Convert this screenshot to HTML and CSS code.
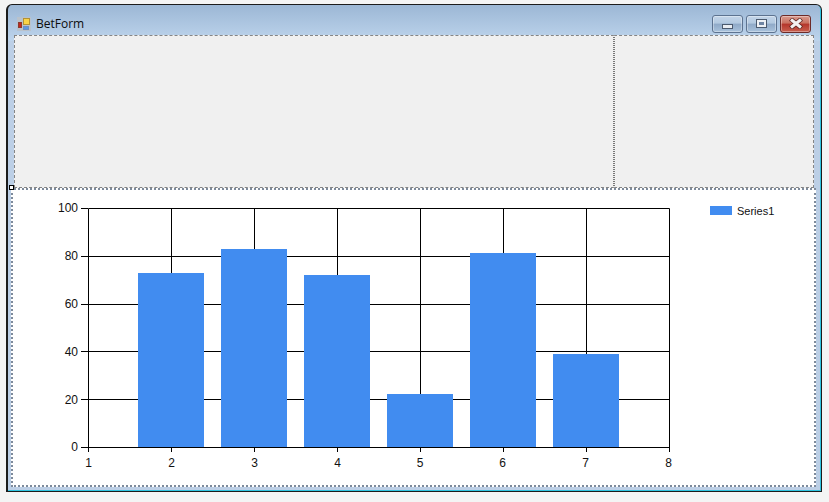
FILE: index.html
```html
<!DOCTYPE html>
<html>

<head>
    <title>BetForm</title>
    <link rel="stylesheet" href="styles.css">
</head>

<body>
    <div class="window">
        <div class="titlebar">
            <svg class="app-icon" width="14" height="14" viewBox="0 0 14 14">
                <rect x="0" y="0" width="14" height="14" fill="#b9c2cc"/>
                <rect x="1.5" y="5.5" width="3" height="5" fill="#c4261c" stroke="#8a3a30"/>
                <rect x="6.5" y="1.5" width="6" height="6" fill="#f9d348" stroke="#b39236"/>
                <rect x="6.5" y="9.5" width="5" height="3" fill="#5b97e6" stroke="#6f90c0"/>
            </svg>
            <span class="title">BetForm</span>
            <div class="controls">
                <div class="ctl">
                    <span class="glyph-min"></span>
                </div>
                <div class="ctl">
                    <span class="glyph-max"></span>
                </div>
                <div class="ctl ctl-close">
                    <svg width="16" height="11" viewBox="0 0 16 11">
                        <path d="M2.5 1 L13.5 10 M13.5 1 L2.5 10" stroke="#5c2420" stroke-width="4.6"/>
                        <path d="M3 1.5 L13 9.5 M13 1.5 L3 9.5" stroke="#f4f2f0" stroke-width="3"/>
                    </svg>
                </div>
            </div>
        </div>
        <div class="top-row">
            <div class="panel panel-left"></div>
            <div class="panel panel-right"></div>
        </div>
        <div class="chart-panel">
            <div class="handle"></div>
            <svg class="chart" viewBox="11 188 805 299">
                <g class="grid">
                    <path d="M171.5 208V447M254.5 208V447M337.5 208V447M420.5 208V447M503.5 208V447M586.5 208V447"/>
                    <path d="M88 256.5H669M88 304.5H669M88 351.5H669M88 399.5H669"/>
                    <path d="M88.5 208.5H669.5V447.5H88.5Z"/>
                    <path d="M81 208.5H88M81 256.5H88M81 304.5H88M81 351.5H88M81 399.5H88M81 447.5H88"/>
                    <path d="M88.5 447V452M171.5 447V452M254.5 447V452M337.5 447V452M420.5 447V452M503.5 447V452M586.5 447V452M669.5 447V452"/>
                </g>
                <g class="bars">
                    <rect x="138" y="273" width="66" height="174"/>
                    <rect x="221" y="249" width="66" height="198"/>
                    <rect x="304" y="275" width="66" height="172"/>
                    <rect x="387" y="394" width="66" height="53"/>
                    <rect x="470" y="253" width="66" height="194"/>
                    <rect x="553" y="354" width="66" height="93"/>
                </g>
                <g class="ticks-y">
                    <text x="78" y="212">100</text>
                    <text x="78" y="260">80</text>
                    <text x="78" y="308">60</text>
                    <text x="78" y="356">40</text>
                    <text x="78" y="404">20</text>
                    <text x="78" y="451">0</text>
                </g>
                <g class="ticks-x">
                    <text x="88.5" y="467">1</text>
                    <text x="171.5" y="467">2</text>
                    <text x="254.5" y="467">3</text>
                    <text x="337.5" y="467">4</text>
                    <text x="420" y="467">5</text>
                    <text x="502.5" y="467">6</text>
                    <text x="585.5" y="467">7</text>
                    <text x="668.5" y="467">8</text>
                </g>
                <rect class="legend-key" x="710" y="206" width="22" height="9"/>
                <text class="legend-text" x="737" y="215">Series1</text>
            </svg>
        </div>
    </div>
</body>

</html>
```

FILE: styles.css
```css
html,
body {
    height: 100%;
    margin: 0;
    padding: 0;
}

body {
    background-color: #f4f4f4;
    font-family: "Open Sans", "Liberation Sans", sans-serif;
}

.window {
    box-sizing: border-box;
    display: flex;
    flex-direction: column;
    width: 816px;
    height: 488px;
    margin: 4px 0 0 6px;
    padding: 0 5px 4px 3px;
    border: 1px solid #1c1c1c;
    border-left-width: 2px;
    border-radius: 6px 6px 0 0;
    background: linear-gradient(#9cb7d5, #bdd4ec 36px, #bccfe6 36px);
    box-shadow: inset -1px -1px 0 #2fc4e0;
}

.titlebar {
    display: flex;
    align-items: center;
    height: 30px;
    flex: none;
    padding: 0 3px 0 6px;
}

.app-icon {
    margin-top: 7px;
}

.title {
    margin: 6px 0 0 5px;
    font-size: 12px;
    color: #0c0c0c;
}

.controls {
    display: flex;
    gap: 3px;
    margin-left: auto;
    margin-top: 7px;
    margin-right: 2px;
}

.ctl {
    display: flex;
    align-items: center;
    justify-content: center;
    box-sizing: border-box;
    width: 31px;
    height: 18px;
    border: 1px solid #5d7390;
    border-radius: 3px;
    background: linear-gradient(#c3d5e9, #b3c9e0 45%, #8fa9c7 50%, #a9c2dc);
    box-shadow: inset 0 0 0 1px rgba(255, 255, 255, 0.35);
}

.ctl-close {
    border-color: #6d2b28;
    background: linear-gradient(#d99a8e, #c9705f 45%, #b4352a 50%, #c8604f);
}

.glyph-min {
    display: block;
    width: 9px;
    height: 3px;
    margin-top: 5px;
    border: 1px solid #4b5a6e;
    background-color: #e9edf2;
}

.glyph-max {
    display: block;
    box-sizing: border-box;
    width: 9px;
    height: 7px;
    border: 2px solid #eef1f5;
    outline: 1px solid #4b5a6e;
    background-color: #6f85a3;
}

.top-row {
    display: flex;
    flex: none;
    height: 153px;
    margin: 0 2px 0 3px;
}

.panel {
    box-sizing: border-box;
    height: 100%;
    border: 1px dashed #858585;
    background-color: #f0f0f0;
}

.panel-left {
    width: 600px;
    border-right: 1px dotted #777;
}

.panel-right {
    width: 200px;
    border-left: 1px dotted #777;
}

.chart-panel {
    position: relative;
    flex: 1;
    min-height: 0;
    box-sizing: border-box;
    background-color: #fff;
    outline: 2px dotted #7d8a9b;
    outline-offset: -2px;
}

.handle {
    position: absolute;
    top: -3px;
    left: -2px;
    box-sizing: border-box;
    width: 5px;
    height: 5px;
    border: 1px solid #000;
    background-color: #fff;
}

.chart {
    display: block;
    width: 100%;
    height: 100%;
    font-family: "Liberation Sans", sans-serif;
}

.bars rect,
.legend-key {
    fill: #418cf0;
}

.grid path {
    fill: none;
    stroke: #000;
    stroke-width: 1;
}

.ticks-y text,
.ticks-x text {
    font-size: 12px;
    fill: #111;
}

.ticks-y text {
    text-anchor: end;
}

.ticks-x text {
    text-anchor: middle;
}

.legend-text {
    font-size: 11px;
    fill: #111;
}
```
